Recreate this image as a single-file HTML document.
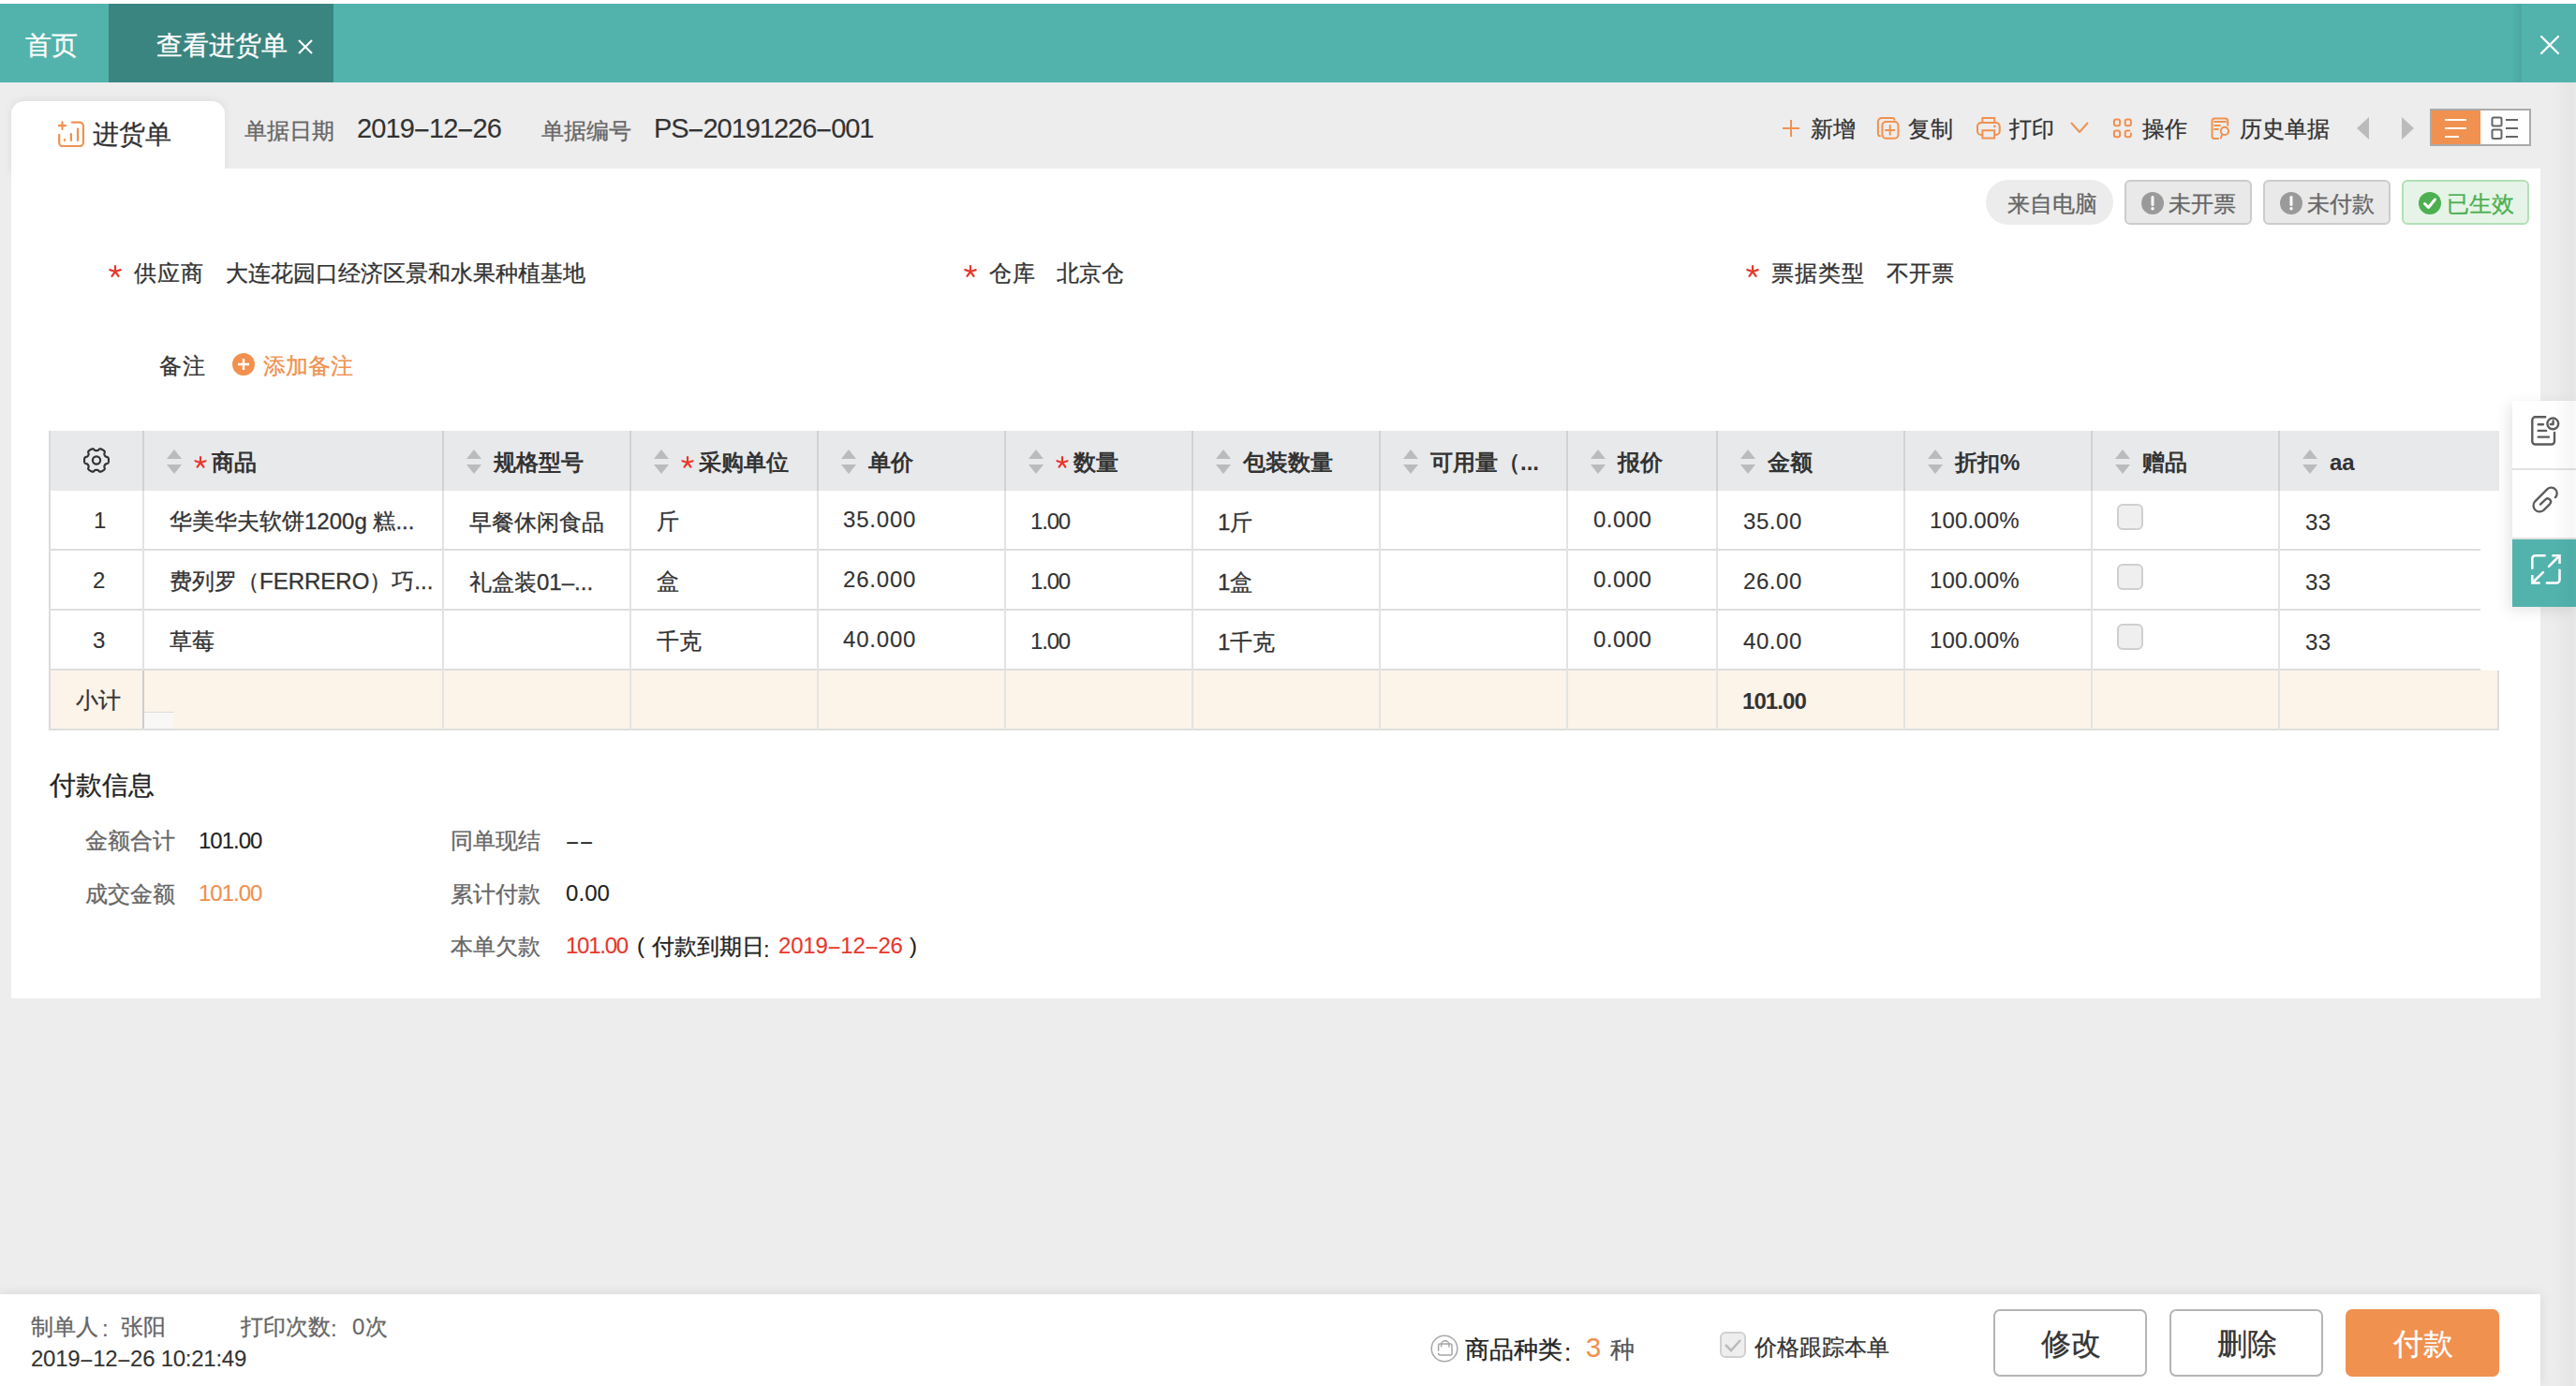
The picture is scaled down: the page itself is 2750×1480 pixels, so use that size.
<!DOCTYPE html>
<html><head><meta charset="utf-8"><title>查看进货单</title>
<style>
*{margin:0;padding:0;box-sizing:border-box}
html,body{width:2750px;height:1480px;overflow:hidden}
body{position:relative;background:#ededed;font-family:"Liberation Sans",sans-serif;color:#333}
.a{position:absolute}
.t{position:absolute;white-space:nowrap;line-height:1;-webkit-text-stroke:0.3px currentColor}
</style></head><body>

<div class="a" style="left:0px;top:0px;width:2750px;height:4px;background:#fff"></div>
<div class="a" style="left:0px;top:4px;width:2750px;height:84px;background:#52b3ad"></div>
<div class="a" style="left:116px;top:4px;width:240px;height:84px;background:#3a8580"></div>
<div class="t" style="left:27px;top:35px;font-size:28px;color:#fff;">首页</div>
<div class="t" style="left:167px;top:35px;font-size:28px;color:#fff;">查看进货单</div>
<svg class="a" style="left:318px;top:42px" width="16" height="16" viewBox="0 0 16 16"><path d="M1 1 L15 15 M15 1 L1 15" stroke="#fff" stroke-width="2.2"/></svg>
<div class="a" style="left:2680px;top:4px;width:12px;height:84px;background:linear-gradient(to right, rgba(0,0,0,0), rgba(0,0,0,0.07))"></div>
<svg class="a" style="left:2712px;top:38px" width="20" height="20" viewBox="0 0 20 20"><path d="M1 1 L19 19 M19 1 L1 19" stroke="#fff" stroke-width="2.4" stroke-linecap="round"/></svg>
<div class="a" style="left:12px;top:180px;width:2700px;height:886px;background:#fff"></div>
<div class="a" style="left:12px;top:108px;width:228px;height:80px;background:#fff;border-radius:14px 14px 0 0;box-shadow:0 -2px 10px rgba(0,0,0,0.06)"></div>
<div class="a" style="left:12px;top:180px;width:240px;height:20px;background:#fff"></div>
<svg class="a" style="left:62px;top:129px" width="28" height="28" viewBox="0 0 28 28"><g fill="none" stroke="#f0914f" stroke-width="2.2" stroke-linecap="round"><path d="M14.8 1.6 H22.9 A4 4 0 0 1 26.9 5.6 V23.2 A4 4 0 0 1 22.9 27.2 H5.2 A4 4 0 0 1 1.2 23.2 V14.9"/><path d="M4.5 1.3 V8.9 M0.9 5.1 H8.1"/><path d="M7 20.1 V21 M13.9 14 V21 M21 8.5 V21"/></g></svg>
<div class="t" style="left:99px;top:130px;font-size:28px;color:#333333;">进货单</div>
<div class="t" style="left:261px;top:128px;font-size:24px;color:#666666;">单据日期</div>
<div class="t" style="left:381px;top:123px;font-size:29px;color:#333333;-webkit-text-stroke:0.12px currentColor;letter-spacing:-0.89px;">2019<span style="position:relative;top:2px">−</span>12<span style="position:relative;top:2px">−</span>26</div>
<div class="t" style="left:578px;top:128px;font-size:24px;color:#666666;">单据编号</div>
<div class="t" style="left:698px;top:123px;font-size:29px;color:#333333;-webkit-text-stroke:0.12px currentColor;letter-spacing:-1.04px;">PS<span style="position:relative;top:2px">−</span>20191226<span style="position:relative;top:2px">−</span>001</div>
<svg class="a" style="left:1903px;top:128px" width="18" height="18" viewBox="0 0 18 18"><path d="M9 0 V18 M0 9 H18" stroke="#f0914f" stroke-width="2"/></svg>
<div class="t" style="left:1933px;top:126px;font-size:24px;color:#333333;">新增</div>
<svg class="a" style="left:2003px;top:125px" width="26" height="25" viewBox="0 0 26 25"><g fill="none" stroke="#f0914f" stroke-width="2"><path d="M4 20.2 A2.3 2.3 0 0 1 1.9 17.9 V5 A4 4 0 0 1 5.9 0.9 H17 A2.5 2.5 0 0 1 19.5 2.8" stroke-linecap="round"/><rect x="6.4" y="5.1" width="17.1" height="17.7" rx="4"/><path d="M14.7 9.1 V18.7 M9.9 13.9 H19.5" stroke-linecap="round"/></g></svg>
<div class="t" style="left:2037px;top:126px;font-size:24px;color:#333333;">复制</div>
<svg class="a" style="left:2109px;top:125px" width="27" height="24" viewBox="0 0 27 24"><g fill="none" stroke="#f0914f" stroke-width="2"><path d="M7.4 6 V1 H20.2 V6"/><path d="M7.4 19 H6 A4 4 0 0 1 2 15 V10 A4 4 0 0 1 6 6 H21.7 A4 4 0 0 1 25.7 10 V15 A4 4 0 0 1 21.7 19 H20.2"/><path d="M7.4 14.3 H20.2 V22.6 H7.4Z"/></g><circle cx="20.3" cy="9.9" r="1.3" fill="#f0914f"/></svg>
<div class="t" style="left:2145px;top:126px;font-size:24px;color:#333333;">打印</div>
<svg class="a" style="left:2210px;top:130px" width="20" height="12" viewBox="0 0 20 12"><path d="M1 1 L10 11 L19 1" fill="none" stroke="#f0914f" stroke-width="2"/></svg>
<svg class="a" style="left:2255px;top:126px" width="22" height="22" viewBox="0 0 22 22"><g fill="none" stroke="#f0914f" stroke-width="2"><rect x="1.9" y="1.4" width="6.2" height="6.8" rx="2"/><rect x="13.7" y="1.4" width="6.2" height="6.8" rx="2"/><rect x="1.9" y="13.4" width="6.2" height="6.9" rx="2"/><path d="M18.5 13.4 H15.7 A2 2 0 0 0 13.7 15.4 V18.3 A2 2 0 0 0 15.7 20.3 H17.9 A2 2 0 0 0 19.9 18.3 V16.5" stroke-linecap="round"/></g></svg>
<div class="t" style="left:2287px;top:126px;font-size:24px;color:#333333;">操作</div>
<svg class="a" style="left:2360px;top:125px" width="21" height="24" viewBox="0 0 21 24"><g fill="none" stroke="#f0914f" stroke-width="2"><path d="M8.8 23 H4 A2.5 2.5 0 0 1 1.5 20.5 V4 A2.5 2.5 0 0 1 4 1.5 H15.7 A2.5 2.5 0 0 1 18.2 4 V9.6"/><path d="M3.3 5 H16.7 M3.3 9 H10.7 M3.3 12.9 H8.6"/><circle cx="14.9" cy="14.9" r="4.1"/><path d="M12.3 18.6 L10.8 22.5" stroke-linecap="round"/></g></svg>
<div class="t" style="left:2391px;top:126px;font-size:24px;color:#333333;">历史单据</div>
<svg class="a" style="left:2516px;top:125px" width="13" height="24" viewBox="0 0 13 24"><path d="M13 0 V24 L0 12Z" fill="#bbbbbb"/></svg>
<svg class="a" style="left:2564px;top:125px" width="13" height="24" viewBox="0 0 13 24"><path d="M0 0 V24 L13 12Z" fill="#bbbbbb"/></svg>
<div class="a" style="left:2594px;top:116px;width:108px;height:40px;background:#fff;border:2px solid #aaaaaa"></div>
<div class="a" style="left:2596px;top:118px;width:52px;height:36px;background:#f0914f"></div>
<svg class="a" style="left:2610px;top:127px" width="24" height="20" viewBox="0 0 24 20"><g stroke="#fff" stroke-width="2"><path d="M0 1 H23 M0 10 H23 M0 19 H15"/></g></svg>
<svg class="a" style="left:2659px;top:124px" width="30" height="26" viewBox="0 0 30 26"><g fill="none" stroke="#666" stroke-width="2"><rect x="1.5" y="1.5" width="10" height="9" rx="1.5"/><rect x="1.5" y="14.5" width="10" height="9.5" rx="1.5"/><path d="M16 4 H29 M16 13 H29 M16 22 H29"/></g></svg>
<div class="a" style="left:2120px;top:192px;width:136px;height:48px;background:#ececec;border-radius:24px"></div>
<div class="t" style="left:2143px;top:206px;font-size:24px;color:#666666;">来自电脑</div>
<div class="a" style="left:2268px;top:192px;width:136px;height:48px;background:#e9e9e9;border:2px solid #cccccc;border-radius:6px"></div>
<svg class="a" style="left:2286px;top:205px" width="24" height="24" viewBox="0 0 24 24"><circle cx="12" cy="12" r="12" fill="#9a9a9a"/><path d="M12 5.5 V13.5" stroke="#fff" stroke-width="3" stroke-linecap="round"/><circle cx="12" cy="17.8" r="1.7" fill="#fff"/></svg>
<div class="t" style="left:2315px;top:206px;font-size:24px;color:#666666;">未开票</div>
<div class="a" style="left:2416px;top:192px;width:136px;height:48px;background:#e9e9e9;border:2px solid #cccccc;border-radius:6px"></div>
<svg class="a" style="left:2434px;top:205px" width="24" height="24" viewBox="0 0 24 24"><circle cx="12" cy="12" r="12" fill="#9a9a9a"/><path d="M12 5.5 V13.5" stroke="#fff" stroke-width="3" stroke-linecap="round"/><circle cx="12" cy="17.8" r="1.7" fill="#fff"/></svg>
<div class="t" style="left:2463px;top:206px;font-size:24px;color:#666666;">未付款</div>
<div class="a" style="left:2564px;top:192px;width:136px;height:48px;background:#e5f4e7;border:2px solid #b3e0b7;border-radius:6px"></div>
<svg class="a" style="left:2582px;top:205px" width="24" height="24" viewBox="0 0 24 24"><circle cx="12" cy="12" r="12" fill="#4caf50"/><path d="M6.5 12.5 L10.5 16.5 L17.5 8" fill="none" stroke="#fff" stroke-width="3" stroke-linecap="round" stroke-linejoin="round"/></svg>
<div class="t" style="left:2612px;top:206px;font-size:24px;color:#4caf50;">已生效</div>
<svg class="a" style="left:113px;top:280px" width="20" height="20" viewBox="0 0 20 20"><path d="M10.00 10.00 L10.00 4.00 M10.00 10.00 L15.71 8.15 M10.00 10.00 L13.53 14.85 M10.00 10.00 L6.47 14.85 M10.00 10.00 L4.29 8.15 " stroke="#e8372b" stroke-width="2.2" stroke-linecap="round" fill="none"/></svg>
<div class="t" style="left:143px;top:280px;font-size:24px;color:#333333;letter-spacing:1px">供应商</div>
<div class="t" style="left:241px;top:280px;font-size:24px;color:#333333;">大连花园口经济区景和水果种植基地</div>
<svg class="a" style="left:1026px;top:280px" width="20" height="20" viewBox="0 0 20 20"><path d="M10.00 10.00 L10.00 4.00 M10.00 10.00 L15.71 8.15 M10.00 10.00 L13.53 14.85 M10.00 10.00 L6.47 14.85 M10.00 10.00 L4.29 8.15 " stroke="#e8372b" stroke-width="2.2" stroke-linecap="round" fill="none"/></svg>
<div class="t" style="left:1056px;top:280px;font-size:24px;color:#333333;letter-spacing:1px">仓库</div>
<div class="t" style="left:1128px;top:280px;font-size:24px;color:#333333;">北京仓</div>
<svg class="a" style="left:1861px;top:280px" width="20" height="20" viewBox="0 0 20 20"><path d="M10.00 10.00 L10.00 4.00 M10.00 10.00 L15.71 8.15 M10.00 10.00 L13.53 14.85 M10.00 10.00 L6.47 14.85 M10.00 10.00 L4.29 8.15 " stroke="#e8372b" stroke-width="2.2" stroke-linecap="round" fill="none"/></svg>
<div class="t" style="left:1891px;top:280px;font-size:24px;color:#333333;letter-spacing:1px">票据类型</div>
<div class="t" style="left:2014px;top:280px;font-size:24px;color:#333333;">不开票</div>
<div class="t" style="left:170px;top:379px;font-size:24px;color:#333333;letter-spacing:1px">备注</div>
<svg class="a" style="left:248px;top:377px" width="24" height="24" viewBox="0 0 24 24"><circle cx="12" cy="12" r="12" fill="#f0914f"/><path d="M12 6 V18 M6 12 H18" stroke="#fff" stroke-width="2.4"/></svg>
<div class="t" style="left:281px;top:379px;font-size:24px;color:#f0914f;">添加备注</div>
<div class="a" style="left:52px;top:460px;width:2616px;height:64px;background:#e8e9eb"></div>
<div class="a" style="left:52px;top:716px;width:2616px;height:64px;background:#fcf3e9"></div>
<div class="a" style="left:52px;top:460px;width:2px;height:320px;background:#dadada"></div>
<div class="a" style="left:2666px;top:716px;width:2px;height:64px;background:#dddddd"></div>
<div class="a" style="left:52px;top:586px;width:2596px;height:2px;background:#dedede"></div>
<div class="a" style="left:52px;top:650px;width:2596px;height:2px;background:#dedede"></div>
<div class="a" style="left:52px;top:714px;width:2596px;height:2px;background:#dedede"></div>
<div class="a" style="left:52px;top:778px;width:2616px;height:2px;background:#dedede"></div>
<div class="a" style="left:152px;top:460px;width:2px;height:64px;background:#d2d2d2"></div>
<div class="a" style="left:152px;top:524px;width:2px;height:256px;background:#e3e3e3"></div>
<div class="a" style="left:472px;top:460px;width:2px;height:64px;background:#d2d2d2"></div>
<div class="a" style="left:472px;top:524px;width:2px;height:256px;background:#e3e3e3"></div>
<div class="a" style="left:672px;top:460px;width:2px;height:64px;background:#d2d2d2"></div>
<div class="a" style="left:672px;top:524px;width:2px;height:256px;background:#e3e3e3"></div>
<div class="a" style="left:872px;top:460px;width:2px;height:64px;background:#d2d2d2"></div>
<div class="a" style="left:872px;top:524px;width:2px;height:256px;background:#e3e3e3"></div>
<div class="a" style="left:1072px;top:460px;width:2px;height:64px;background:#d2d2d2"></div>
<div class="a" style="left:1072px;top:524px;width:2px;height:256px;background:#e3e3e3"></div>
<div class="a" style="left:1272px;top:460px;width:2px;height:64px;background:#d2d2d2"></div>
<div class="a" style="left:1272px;top:524px;width:2px;height:256px;background:#e3e3e3"></div>
<div class="a" style="left:1472px;top:460px;width:2px;height:64px;background:#d2d2d2"></div>
<div class="a" style="left:1472px;top:524px;width:2px;height:256px;background:#e3e3e3"></div>
<div class="a" style="left:1672px;top:460px;width:2px;height:64px;background:#d2d2d2"></div>
<div class="a" style="left:1672px;top:524px;width:2px;height:256px;background:#e3e3e3"></div>
<div class="a" style="left:1832px;top:460px;width:2px;height:64px;background:#d2d2d2"></div>
<div class="a" style="left:1832px;top:524px;width:2px;height:256px;background:#e3e3e3"></div>
<div class="a" style="left:2032px;top:460px;width:2px;height:64px;background:#d2d2d2"></div>
<div class="a" style="left:2032px;top:524px;width:2px;height:256px;background:#e3e3e3"></div>
<div class="a" style="left:2232px;top:460px;width:2px;height:64px;background:#d2d2d2"></div>
<div class="a" style="left:2232px;top:524px;width:2px;height:256px;background:#e3e3e3"></div>
<div class="a" style="left:2432px;top:460px;width:2px;height:64px;background:#d2d2d2"></div>
<div class="a" style="left:2432px;top:524px;width:2px;height:256px;background:#e3e3e3"></div>
<svg class="a" style="left:89px;top:478px" width="28" height="27" viewBox="0 0 28 27"><path d="M27.00 13.50 L27.00 13.84 L26.98 14.18 L26.96 14.52 L26.92 14.86 L26.87 15.19 L26.81 15.53 L26.72 15.86 L26.58 16.17 L26.37 16.47 L26.04 16.73 L25.57 16.93 L25.01 17.08 L24.47 17.21 L24.05 17.36 L23.75 17.54 L23.53 17.74 L23.35 17.96 L23.20 18.19 L23.06 18.42 L22.92 18.65 L22.79 18.88 L22.66 19.12 L22.54 19.37 L22.44 19.63 L22.37 19.92 L22.37 20.28 L22.45 20.72 L22.60 21.25 L22.76 21.81 L22.82 22.32 L22.76 22.73 L22.61 23.06 L22.40 23.33 L22.16 23.58 L21.90 23.80 L21.64 24.01 L21.36 24.21 L21.08 24.40 L20.79 24.58 L20.50 24.76 L20.20 24.92 L19.90 25.08 L19.60 25.23 L19.28 25.37 L18.97 25.50 L18.65 25.61 L18.32 25.69 L17.97 25.73 L17.61 25.70 L17.23 25.54 L16.82 25.24 L16.41 24.82 L16.02 24.42 L15.68 24.14 L15.38 23.96 L15.09 23.87 L14.81 23.83 L14.54 23.81 L14.27 23.80 L14.00 23.80 L13.73 23.80 L13.46 23.81 L13.19 23.83 L12.91 23.87 L12.62 23.96 L12.32 24.14 L11.98 24.42 L11.59 24.82 L11.18 25.24 L10.77 25.54 L10.39 25.70 L10.03 25.73 L9.68 25.69 L9.35 25.61 L9.03 25.50 L8.72 25.37 L8.40 25.23 L8.10 25.08 L7.80 24.92 L7.50 24.76 L7.21 24.58 L6.92 24.40 L6.64 24.21 L6.36 24.01 L6.10 23.80 L5.84 23.58 L5.60 23.33 L5.39 23.06 L5.24 22.73 L5.18 22.32 L5.24 21.81 L5.40 21.25 L5.55 20.72 L5.63 20.28 L5.63 19.92 L5.56 19.63 L5.46 19.37 L5.34 19.12 L5.21 18.88 L5.08 18.65 L4.94 18.42 L4.80 18.19 L4.65 17.96 L4.47 17.74 L4.25 17.54 L3.95 17.36 L3.53 17.21 L2.99 17.08 L2.43 16.93 L1.96 16.73 L1.63 16.47 L1.42 16.17 L1.28 15.86 L1.19 15.53 L1.13 15.19 L1.08 14.86 L1.04 14.52 L1.02 14.18 L1.00 13.84 L1.00 13.50 L1.00 13.16 L1.02 12.82 L1.04 12.48 L1.08 12.14 L1.13 11.81 L1.19 11.47 L1.28 11.14 L1.42 10.83 L1.63 10.53 L1.96 10.27 L2.43 10.07 L2.99 9.92 L3.53 9.79 L3.95 9.64 L4.25 9.46 L4.47 9.26 L4.65 9.04 L4.80 8.81 L4.94 8.58 L5.08 8.35 L5.21 8.12 L5.34 7.88 L5.46 7.63 L5.56 7.37 L5.63 7.08 L5.63 6.72 L5.55 6.28 L5.40 5.75 L5.24 5.19 L5.18 4.68 L5.24 4.27 L5.39 3.94 L5.60 3.67 L5.84 3.42 L6.10 3.20 L6.36 2.99 L6.64 2.79 L6.92 2.60 L7.21 2.42 L7.50 2.24 L7.80 2.08 L8.10 1.92 L8.40 1.77 L8.72 1.63 L9.03 1.50 L9.35 1.39 L9.68 1.31 L10.03 1.27 L10.39 1.30 L10.77 1.46 L11.18 1.76 L11.59 2.18 L11.98 2.58 L12.32 2.86 L12.62 3.04 L12.91 3.13 L13.19 3.17 L13.46 3.19 L13.73 3.20 L14.00 3.20 L14.27 3.20 L14.54 3.19 L14.81 3.17 L15.09 3.13 L15.38 3.04 L15.68 2.86 L16.02 2.58 L16.41 2.18 L16.82 1.76 L17.23 1.46 L17.61 1.30 L17.97 1.27 L18.32 1.31 L18.65 1.39 L18.97 1.50 L19.28 1.63 L19.60 1.77 L19.90 1.92 L20.20 2.08 L20.50 2.24 L20.79 2.42 L21.08 2.60 L21.36 2.79 L21.64 2.99 L21.90 3.20 L22.16 3.42 L22.40 3.67 L22.61 3.94 L22.76 4.27 L22.82 4.68 L22.76 5.19 L22.60 5.75 L22.45 6.28 L22.37 6.72 L22.37 7.08 L22.44 7.37 L22.54 7.63 L22.66 7.88 L22.79 8.12 L22.92 8.35 L23.06 8.58 L23.20 8.81 L23.35 9.04 L23.53 9.26 L23.75 9.46 L24.05 9.64 L24.47 9.79 L25.01 9.92 L25.57 10.07 L26.04 10.27 L26.37 10.53 L26.58 10.83 L26.72 11.14 L26.81 11.47 L26.87 11.81 L26.92 12.14 L26.96 12.48 L26.98 12.82 L27.00 13.16 L27.00 13.50Z" fill="none" stroke="#333" stroke-width="2.2" stroke-linejoin="round"/><circle cx="14" cy="13.5" r="4.1" fill="none" stroke="#333" stroke-width="2.2"/></svg>
<svg class="a" style="left:178px;top:480px" width="16" height="26" viewBox="0 0 16 26"><path d="M8 0 L16 10 L0 10Z M0 16 L16 16 L8 26Z" fill="#bbbbbb"/></svg>
<svg class="a" style="left:204px;top:484px" width="20" height="20" viewBox="0 0 20 20"><path d="M10.00 10.00 L10.00 4.20 M10.00 10.00 L15.52 8.21 M10.00 10.00 L13.41 14.69 M10.00 10.00 L6.59 14.69 M10.00 10.00 L4.48 8.21 " stroke="#e8372b" stroke-width="2.2" stroke-linecap="round" fill="none"/></svg>
<div class="t" style="left:226px;top:482px;font-size:24px;color:#333;font-weight:bold;-webkit-text-stroke:0">商品</div>
<svg class="a" style="left:498px;top:480px" width="16" height="26" viewBox="0 0 16 26"><path d="M8 0 L16 10 L0 10Z M0 16 L16 16 L8 26Z" fill="#bbbbbb"/></svg>
<div class="t" style="left:527px;top:482px;font-size:24px;color:#333;font-weight:bold;-webkit-text-stroke:0">规格型号</div>
<svg class="a" style="left:698px;top:480px" width="16" height="26" viewBox="0 0 16 26"><path d="M8 0 L16 10 L0 10Z M0 16 L16 16 L8 26Z" fill="#bbbbbb"/></svg>
<svg class="a" style="left:724px;top:484px" width="20" height="20" viewBox="0 0 20 20"><path d="M10.00 10.00 L10.00 4.20 M10.00 10.00 L15.52 8.21 M10.00 10.00 L13.41 14.69 M10.00 10.00 L6.59 14.69 M10.00 10.00 L4.48 8.21 " stroke="#e8372b" stroke-width="2.2" stroke-linecap="round" fill="none"/></svg>
<div class="t" style="left:746px;top:482px;font-size:24px;color:#333;font-weight:bold;-webkit-text-stroke:0">采购单位</div>
<svg class="a" style="left:898px;top:480px" width="16" height="26" viewBox="0 0 16 26"><path d="M8 0 L16 10 L0 10Z M0 16 L16 16 L8 26Z" fill="#bbbbbb"/></svg>
<div class="t" style="left:927px;top:482px;font-size:24px;color:#333;font-weight:bold;-webkit-text-stroke:0">单价</div>
<svg class="a" style="left:1098px;top:480px" width="16" height="26" viewBox="0 0 16 26"><path d="M8 0 L16 10 L0 10Z M0 16 L16 16 L8 26Z" fill="#bbbbbb"/></svg>
<svg class="a" style="left:1124px;top:484px" width="20" height="20" viewBox="0 0 20 20"><path d="M10.00 10.00 L10.00 4.20 M10.00 10.00 L15.52 8.21 M10.00 10.00 L13.41 14.69 M10.00 10.00 L6.59 14.69 M10.00 10.00 L4.48 8.21 " stroke="#e8372b" stroke-width="2.2" stroke-linecap="round" fill="none"/></svg>
<div class="t" style="left:1146px;top:482px;font-size:24px;color:#333;font-weight:bold;-webkit-text-stroke:0">数量</div>
<svg class="a" style="left:1298px;top:480px" width="16" height="26" viewBox="0 0 16 26"><path d="M8 0 L16 10 L0 10Z M0 16 L16 16 L8 26Z" fill="#bbbbbb"/></svg>
<div class="t" style="left:1327px;top:482px;font-size:24px;color:#333;font-weight:bold;-webkit-text-stroke:0">包装数量</div>
<svg class="a" style="left:1498px;top:480px" width="16" height="26" viewBox="0 0 16 26"><path d="M8 0 L16 10 L0 10Z M0 16 L16 16 L8 26Z" fill="#bbbbbb"/></svg>
<div class="t" style="left:1527px;top:482px;font-size:24px;color:#333;font-weight:bold;-webkit-text-stroke:0">可用量（...</div>
<svg class="a" style="left:1698px;top:480px" width="16" height="26" viewBox="0 0 16 26"><path d="M8 0 L16 10 L0 10Z M0 16 L16 16 L8 26Z" fill="#bbbbbb"/></svg>
<div class="t" style="left:1727px;top:482px;font-size:24px;color:#333;font-weight:bold;-webkit-text-stroke:0">报价</div>
<svg class="a" style="left:1858px;top:480px" width="16" height="26" viewBox="0 0 16 26"><path d="M8 0 L16 10 L0 10Z M0 16 L16 16 L8 26Z" fill="#bbbbbb"/></svg>
<div class="t" style="left:1887px;top:482px;font-size:24px;color:#333;font-weight:bold;-webkit-text-stroke:0">金额</div>
<svg class="a" style="left:2058px;top:480px" width="16" height="26" viewBox="0 0 16 26"><path d="M8 0 L16 10 L0 10Z M0 16 L16 16 L8 26Z" fill="#bbbbbb"/></svg>
<div class="t" style="left:2087px;top:482px;font-size:24px;color:#333;font-weight:bold;-webkit-text-stroke:0">折扣%</div>
<svg class="a" style="left:2258px;top:480px" width="16" height="26" viewBox="0 0 16 26"><path d="M8 0 L16 10 L0 10Z M0 16 L16 16 L8 26Z" fill="#bbbbbb"/></svg>
<div class="t" style="left:2287px;top:482px;font-size:24px;color:#333;font-weight:bold;-webkit-text-stroke:0">赠品</div>
<svg class="a" style="left:2458px;top:480px" width="16" height="26" viewBox="0 0 16 26"><path d="M8 0 L16 10 L0 10Z M0 16 L16 16 L8 26Z" fill="#bbbbbb"/></svg>
<div class="t" style="left:2487px;top:482px;font-size:24px;color:#333;font-weight:bold;-webkit-text-stroke:0">aa</div>
<div class="t" style="left:100px;top:544px;font-size:24px;color:#333333;-webkit-text-stroke:0.12px currentColor;">1</div>
<div class="t" style="left:181px;top:545px;font-size:24px;color:#333333;">华美华夫软饼1200g 糕...</div>
<div class="t" style="left:501px;top:546px;font-size:24px;color:#333333;">早餐休闲食品</div>
<div class="t" style="left:701px;top:545px;font-size:24px;color:#333333;">斤</div>
<div class="t" style="left:900px;top:543px;font-size:24px;color:#333333;-webkit-text-stroke:0.12px currentColor;letter-spacing:0.80px;">35.000</div>
<div class="t" style="left:1100px;top:545px;font-size:24px;color:#333333;-webkit-text-stroke:0.12px currentColor;letter-spacing:-1.17px;">1.00</div>
<div class="t" style="left:1300px;top:546px;font-size:24px;color:#333333;">1斤</div>
<div class="t" style="left:1701px;top:543px;font-size:24px;color:#333333;-webkit-text-stroke:0.12px currentColor;letter-spacing:0.43px;">0.000</div>
<div class="t" style="left:1861px;top:545px;font-size:24px;color:#333333;-webkit-text-stroke:0.12px currentColor;letter-spacing:0.57px;">35.00</div>
<div class="t" style="left:2060px;top:544px;font-size:24px;color:#333333;-webkit-text-stroke:0.12px currentColor;letter-spacing:0.13px;">100.00%</div>
<div class="a" style="left:2260px;top:538px;width:28px;height:28px;background:#efefef;border:2px solid #cfcfcf;border-radius:6px"></div>
<div class="t" style="left:2461px;top:546px;font-size:24px;color:#333333;-webkit-text-stroke:0.12px currentColor;letter-spacing:0.30px;">33</div>
<div class="t" style="left:99px;top:608px;font-size:24px;color:#333333;-webkit-text-stroke:0.12px currentColor;">2</div>
<div class="t" style="left:181px;top:609px;font-size:24px;color:#333333;">费列罗（FERRERO）巧...</div>
<div class="t" style="left:501px;top:610px;font-size:24px;color:#333333;">礼盒装01–...</div>
<div class="t" style="left:701px;top:609px;font-size:24px;color:#333333;">盒</div>
<div class="t" style="left:900px;top:607px;font-size:24px;color:#333333;-webkit-text-stroke:0.12px currentColor;letter-spacing:0.80px;">26.000</div>
<div class="t" style="left:1100px;top:609px;font-size:24px;color:#333333;-webkit-text-stroke:0.12px currentColor;letter-spacing:-1.17px;">1.00</div>
<div class="t" style="left:1300px;top:610px;font-size:24px;color:#333333;">1盒</div>
<div class="t" style="left:1701px;top:607px;font-size:24px;color:#333333;-webkit-text-stroke:0.12px currentColor;letter-spacing:0.43px;">0.000</div>
<div class="t" style="left:1861px;top:609px;font-size:24px;color:#333333;-webkit-text-stroke:0.12px currentColor;letter-spacing:0.57px;">26.00</div>
<div class="t" style="left:2060px;top:608px;font-size:24px;color:#333333;-webkit-text-stroke:0.12px currentColor;letter-spacing:0.13px;">100.00%</div>
<div class="a" style="left:2260px;top:602px;width:28px;height:28px;background:#efefef;border:2px solid #cfcfcf;border-radius:6px"></div>
<div class="t" style="left:2461px;top:610px;font-size:24px;color:#333333;-webkit-text-stroke:0.12px currentColor;letter-spacing:0.30px;">33</div>
<div class="t" style="left:99px;top:672px;font-size:24px;color:#333333;-webkit-text-stroke:0.12px currentColor;">3</div>
<div class="t" style="left:181px;top:673px;font-size:24px;color:#333333;">草莓</div>
<div class="t" style="left:701px;top:673px;font-size:24px;color:#333333;">千克</div>
<div class="t" style="left:900px;top:671px;font-size:24px;color:#333333;-webkit-text-stroke:0.12px currentColor;letter-spacing:0.80px;">40.000</div>
<div class="t" style="left:1100px;top:673px;font-size:24px;color:#333333;-webkit-text-stroke:0.12px currentColor;letter-spacing:-1.17px;">1.00</div>
<div class="t" style="left:1300px;top:674px;font-size:24px;color:#333333;">1千克</div>
<div class="t" style="left:1701px;top:671px;font-size:24px;color:#333333;-webkit-text-stroke:0.12px currentColor;letter-spacing:0.43px;">0.000</div>
<div class="t" style="left:1861px;top:673px;font-size:24px;color:#333333;-webkit-text-stroke:0.12px currentColor;letter-spacing:0.57px;">40.00</div>
<div class="t" style="left:2060px;top:672px;font-size:24px;color:#333333;-webkit-text-stroke:0.12px currentColor;letter-spacing:0.13px;">100.00%</div>
<div class="a" style="left:2260px;top:666px;width:28px;height:28px;background:#efefef;border:2px solid #cfcfcf;border-radius:6px"></div>
<div class="t" style="left:2461px;top:674px;font-size:24px;color:#333333;-webkit-text-stroke:0.12px currentColor;letter-spacing:0.30px;">33</div>
<div class="t" style="left:81px;top:736px;font-size:24px;color:#333333;">小计</div>
<div class="t" style="left:1860px;top:737px;font-size:24px;color:#333333;font-weight:bold;-webkit-text-stroke:0;letter-spacing:-0.92px;">101.00</div>
<div class="a" style="left:154px;top:760px;width:32px;height:18px;background:#f9f8f6;border-top:1px solid #dcdcdc"></div>
<div class="a" style="left:152px;top:716px;width:2px;height:62px;background:#cdcdcd"></div>
<div class="t" style="left:53px;top:825px;font-size:28px;color:#222;">付款信息</div>
<div class="t" style="left:91px;top:886px;font-size:24px;color:#666666;">金额合计</div>
<div class="t" style="left:212px;top:886px;font-size:24px;color:#222;-webkit-text-stroke:0.12px currentColor;letter-spacing:-1.02px;">101.00</div>
<div class="t" style="left:91px;top:943px;font-size:24px;color:#666666;">成交金额</div>
<div class="t" style="left:212px;top:942px;font-size:24px;color:#f0914f;-webkit-text-stroke:0.12px currentColor;letter-spacing:-1.02px;">101.00</div>
<div class="t" style="left:481px;top:886px;font-size:24px;color:#666666;">同单现结</div>
<div class="t" style="left:604px;top:886px;font-size:24px;color:#222;-webkit-text-stroke:0.12px currentColor;"><span style="position:relative;top:2px">−</span></div>
<div class="t" style="left:619px;top:886px;font-size:24px;color:#222;-webkit-text-stroke:0.12px currentColor;"><span style="position:relative;top:2px">−</span></div>
<div class="t" style="left:481px;top:943px;font-size:24px;color:#666666;">累计付款</div>
<div class="t" style="left:604px;top:942px;font-size:24px;color:#222;-webkit-text-stroke:0.12px currentColor;letter-spacing:0.07px;">0.00</div>
<div class="t" style="left:481px;top:999px;font-size:24px;color:#666666;">本单欠款</div>
<div class="t" style="left:604px;top:998px;font-size:24px;color:#e8372b;-webkit-text-stroke:0.12px currentColor;letter-spacing:-1.26px;">101.00</div>
<div class="t" style="left:680px;top:998px;font-size:24px;color:#222;-webkit-text-stroke:0.12px currentColor;">(</div>
<div class="t" style="left:696px;top:999px;font-size:24px;color:#222;">付款到期日</div>
<div class="t" style="left:815px;top:1002px;font-size:24px;color:#222;-webkit-text-stroke:0.12px currentColor;">:</div>
<div class="t" style="left:831px;top:998px;font-size:24px;color:#e8372b;-webkit-text-stroke:0.12px currentColor;letter-spacing:-0.22px;">2019<span style="position:relative;top:2px">−</span>12<span style="position:relative;top:2px">−</span>26</div>
<div class="t" style="left:971px;top:998px;font-size:24px;color:#222;-webkit-text-stroke:0.12px currentColor;">)</div>
<div class="a" style="left:2682px;top:428px;width:68px;height:220px;background:#fff;box-shadow:-4px 4px 14px rgba(0,0,0,0.10)"></div>
<div class="a" style="left:2682px;top:500px;width:68px;height:2px;background:#e2e2e2"></div>
<div class="a" style="left:2682px;top:574px;width:68px;height:2px;background:#e2e2e2"></div>
<div class="a" style="left:2682px;top:576px;width:68px;height:72px;background:#52b3ad"></div>
<svg class="a" style="left:2697px;top:440px" width="40" height="40" viewBox="0 0 40 40"><g fill="none" stroke="#5c5c5c" stroke-width="2.4" stroke-linecap="round" stroke-linejoin="round"><path d="M20.2 5.3 H9.5 A3.2 3.2 0 0 0 6.3 8.5 V31.3 A3.2 3.2 0 0 0 9.5 34.5 H26.8 A3.2 3.2 0 0 0 30 31.3 V22"/><path d="M12.7 13.3 H17.9 M12.7 19.9 H21.1 M12.7 26.6 H24"/><circle cx="28.3" cy="12.4" r="5.9"/><path d="M28.6 9.5 V13 H25.8"/></g></svg>
<svg class="a" style="left:2698px;top:514px" width="40" height="40" viewBox="0 0 40 40"><path d="M13.9 24.6 L19.4 19.3 A3.4 3.4 0 0 1 24.2 24.1 L17.4 30.9 A6.6 6.6 0 0 1 8.1 21.6 L21.3 8.4 A6.1 6.1 0 0 1 29.9 17.1" fill="none" stroke="#5c5c5c" stroke-width="2.3" stroke-linecap="round"/></svg>
<svg class="a" style="left:2697px;top:588px" width="40" height="40" viewBox="0 0 40 40"><g fill="none" stroke="#fff" stroke-width="2.6" stroke-linecap="round"><path d="M19.6 5.3 H9.5 A3.2 3.2 0 0 0 6.3 8.5 V18.8"/><path d="M35.5 20.8 V31.3 A3.2 3.2 0 0 1 32.3 34.5 H21.9"/><path d="M27.4 5.3 H35.5 V13.9" stroke-linejoin="miter" stroke-linecap="butt"/><path d="M34.8 6 L24 16.8"/><path d="M6.3 26 V34.5 H14.7" stroke-linejoin="miter" stroke-linecap="butt"/><path d="M7 33.8 L17.9 23.1"/></g></svg>
<div class="a" style="left:0px;top:1382px;width:2712px;height:98px;background:#fff;box-shadow:0 0 12px rgba(0,0,0,0.10)"></div>
<div class="t" style="left:33px;top:1405px;font-size:24px;color:#666666;">制单人</div>
<div class="t" style="left:109px;top:1407px;font-size:24px;color:#666666;-webkit-text-stroke:0.12px currentColor;">:</div>
<div class="t" style="left:129px;top:1405px;font-size:24px;color:#666666;">张阳</div>
<div class="t" style="left:257px;top:1405px;font-size:24px;color:#666666;">打印次数</div>
<div class="t" style="left:353px;top:1407px;font-size:24px;color:#666666;-webkit-text-stroke:0.12px currentColor;">:</div>
<div class="t" style="left:376px;top:1405px;font-size:24px;color:#666666;-webkit-text-stroke:0.12px currentColor;">0</div>
<div class="t" style="left:390px;top:1405px;font-size:24px;color:#666666;">次</div>
<div class="t" style="left:33px;top:1439px;font-size:24px;color:#333333;-webkit-text-stroke:0.12px currentColor;letter-spacing:-0.26px;">2019<span style="position:relative;top:2px">−</span>12<span style="position:relative;top:2px">−</span>26 10:21:49</div>
<svg class="a" style="left:1527px;top:1425px" width="30" height="30" viewBox="0 0 30 30"><circle cx="15" cy="15" r="13.8" fill="none" stroke="#aaa" stroke-width="1.6"/><g fill="none" stroke="#a5a5a5" stroke-width="1.5"><path d="M8.6 17.8 V11.5 A1.5 1.5 0 0 1 10.1 10 H21.5 A1.5 1.5 0 0 1 23 11.5 V20.5 A1.5 1.5 0 0 1 21.5 22 H10.6 A2 2 0 0 1 8.6 20 V19.8"/><path d="M11.6 13.5 V11 A4.2 4.2 0 0 1 20 11 V13.5"/></g></svg>
<div class="t" style="left:1564px;top:1428px;font-size:26px;color:#222;">商品种类</div>
<div class="t" style="left:1670px;top:1431px;font-size:26px;color:#222;-webkit-text-stroke:0.12px currentColor;">:</div>
<div class="t" style="left:1693px;top:1425px;font-size:29px;color:#f0914f;-webkit-text-stroke:0.12px currentColor;">3</div>
<div class="t" style="left:1719px;top:1428px;font-size:26px;color:#555;">种</div>
<div class="a" style="left:1836px;top:1422px;width:28px;height:28px;background:#eeeeee;border:2px solid #d0d0d0;border-radius:6px"></div>
<svg class="a" style="left:1840px;top:1428px" width="20" height="16" viewBox="0 0 20 16"><path d="M2 8 L8 14 L18 3" fill="none" stroke="#bbb" stroke-width="2.6"/></svg>
<div class="t" style="left:1873px;top:1427px;font-size:24px;color:#333333;">价格跟踪本单</div>
<div class="a" style="left:2128px;top:1398px;width:164px;height:72px;background:#fff;border:2px solid #b5b5b5;border-radius:7px"></div>
<div class="t" style="left:2179px;top:1419px;font-size:32px;color:#333333;">修改</div>
<div class="a" style="left:2316px;top:1398px;width:164px;height:72px;background:#fff;border:2px solid #b5b5b5;border-radius:7px"></div>
<div class="t" style="left:2367px;top:1419px;font-size:32px;color:#333333;">删除</div>
<div class="a" style="left:2504px;top:1398px;width:164px;height:72px;background:#f0914f;border-radius:7px"></div>
<div class="t" style="left:2555px;top:1419px;font-size:32px;color:#fff;">付款</div>
<div class="a" style="left:2724px;top:88px;width:26px;height:1392px;background:linear-gradient(to right, rgba(0,0,0,0), rgba(0,0,0,0.035) 85%, rgba(0,0,0,0.02))"></div>
</body></html>
